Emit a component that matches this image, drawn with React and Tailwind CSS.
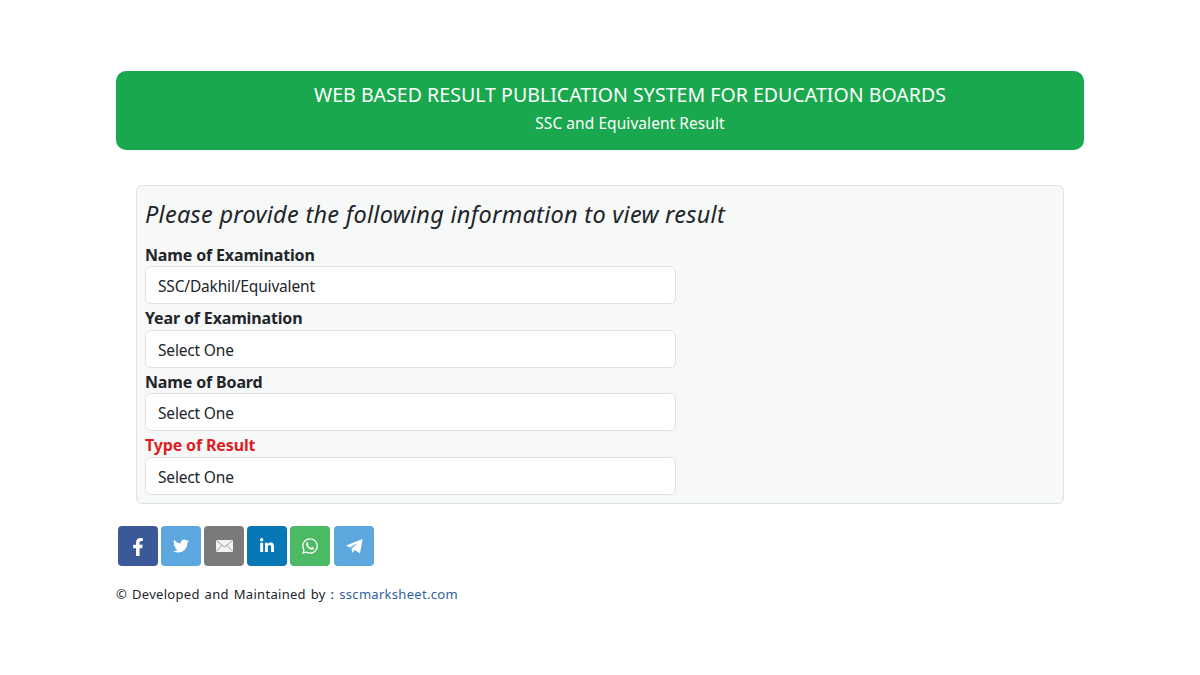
import React from "react";
import { FaFacebookF, FaTwitter, FaLinkedinIn, FaWhatsapp } from "react-icons/fa";

function Field({ label, value, red }) {
  return (
    <div className="flex flex-col">
      <label className={`h-[25.5px] text-[16px] leading-[28px] font-bold tracking-[-0.15px] ${red ? "text-[#dc1f26]" : "text-[#212529]"}`}>{label}</label>
      <div className="h-[38px] w-[531px] rounded-[6px] border border-[#dee2e6] bg-white px-3 text-[15.5px] leading-[38px] text-[#212529] tracking-[-0.17px]">{value}</div>
    </div>
  );
}

function Share({ color, extra, children }) {
  return (
    <div className={`flex h-10 w-10 items-center justify-center rounded-[4px] text-white ${color} ${extra || ""}`}>{children}</div>
  );
}

export default function App() {
  return (
    <div className="min-h-[675px] bg-white pt-[71px] font-['Noto_Sans',sans-serif]">
      <div className="mx-auto w-[968px]">
        <div className="flex h-[79px] flex-col items-center rounded-[10px] bg-[#19a84d] pt-[10px] pl-[60px] text-white">
          <div className="text-[19.5px] leading-[28px] tracking-[0.04px]">WEB BASED RESULT PUBLICATION SYSTEM FOR EDUCATION BOARDS</div>
          <div className="text-[15.5px] leading-[28px] tracking-[0.06px]">SSC and Equivalent Result</div>
        </div>
        <div className="mx-5 mt-[35px] h-[319px] rounded-[6px] border border-[#dfe3e6] bg-[#f7f8f8] px-2 pt-[12px]">
          <div className="mb-[9.5px] h-[33px] text-[23.5px] leading-[33px] italic tracking-[0.28px] text-[#212529]">Please provide the following information to view result</div>
          <Field label="Name of Examination" value="SSC/Dakhil/Equivalent" />
          <Field label="Year of Examination" value="Select One" />
          <Field label="Name of Board" value="Select One" />
          <Field label="Type of Result" value="Select One" red />
        </div>
        <div className="mt-[22px] ml-[2px] flex gap-[3px]">
          <Share color="bg-[#3b5998]"><FaFacebookF size={18} className="mt-[2px]" /></Share>
          <Share color="bg-[#5ba7de]"><FaTwitter size={16} /></Share>
          <Share color="bg-[#7a7a7a]">
            <svg width="17" height="12" viewBox="0 0 17 12">
              <rect width="17" height="12" rx="1" fill="#f2f2f2" />
              <path d="M0.5 0.7 8.5 7 16.5 0.7M0.5 11.3 6 5.2M16.5 11.3 11 5.2" fill="none" stroke="#8a8a8a" strokeWidth="0.8" />
            </svg>
          </Share>
          <Share color="bg-[#0877b5]"><FaLinkedinIn size={16} /></Share>
          <Share color="bg-[#4cb964]"><FaWhatsapp size={18} /></Share>
          <Share color="bg-[#5ba7de]" extra="ml-[1px]">
            <svg width="17" height="15" viewBox="0 0 17 15">
              <path d="M0 6.6 16.6 0 14 14.6 8.8 11 6.2 14 5.6 9.6 12.6 3.4 4 8.6Z" fill="#fff" />
            </svg>
          </Share>
        </div>
        <div className="mt-[18px] text-[13px] leading-[20px] tracking-[0.3px] [word-spacing:1.2px] text-[#212529]">
          © Developed and Maintained by : <a className="text-[#2f5f9e]">sscmarksheet.com</a>
        </div>
      </div>
    </div>
  );
}
